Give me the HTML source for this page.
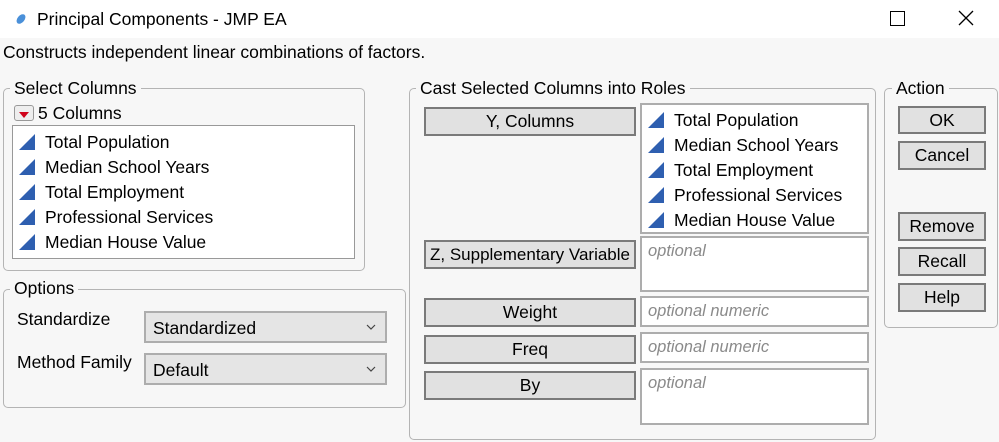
<!DOCTYPE html>
<html><head><style>
*{box-sizing:border-box;margin:0;padding:0}
body{width:999px;height:442px;background:#f7f7f7;font-family:"Liberation Sans",sans-serif;font-size:17.5px;color:#000;position:relative;overflow:hidden}
.a{position:absolute;white-space:nowrap}
.tb{position:absolute;left:0;top:0;width:999px;height:38px;background:#fff}
.grp{position:absolute;border:1px solid #b4b4b4;border-radius:5px}
.lg{position:absolute;background:#f7f7f7;padding:0 4px;font-size:17.5px;line-height:20px}
.btn{position:absolute;background:#e1e1e1;border:2px solid #7a7a7a;font-size:17.5px;display:flex;align-items:center;justify-content:center;white-space:nowrap}
.box{position:absolute;background:#fff;border:2px solid #adadad}
.it{position:absolute;height:25px;line-height:25px;font-size:17.5px;white-space:nowrap}
.tri{display:inline-block;width:18px;height:17px;vertical-align:-2px;margin-right:9px}
.opt{position:absolute;left:6px;top:4px;color:#8a8a8a;font-style:italic;font-size:16.5px;white-space:nowrap}
.dd{position:absolute;background:#e5e5e5;border:2px solid #adadad;font-size:17.5px;padding-left:7px;display:flex;align-items:center}
.dd svg{position:absolute;right:9px;top:11px}
</style></head><body>
<div class="tb"></div>
<svg class="a" style="left:14px;top:12px" width="14" height="14"><ellipse cx="7" cy="7" rx="3.5" ry="5.5" transform="rotate(40 7 7)" fill="#4a90d9"/></svg>
<div class="a" style="left:37px;top:9px;font-size:17.5px">Principal Components - JMP EA</div>
<div class="a" style="left:890px;top:11px;width:15px;height:15px;border:1.5px solid #000"></div>
<svg class="a" style="left:958px;top:10px" width="16" height="16"><path d="M1 1L15 15M15 1L1 15" stroke="#000" stroke-width="1.3"/></svg>
<div class="a" style="left:3px;top:42px">Constructs independent linear combinations of factors.</div>

<div class="grp" style="left:3px;top:88px;width:362px;height:183px"></div>
<div class="lg" style="left:10px;top:78px">Select Columns</div>
<div class="a" style="left:14px;top:105px;width:20px;height:16px;border:1px solid #999;border-radius:3px;background:#eee"><svg width="18" height="14"><path d="M4 4L14 4L9 10Z" fill="#d0021b"/></svg></div>
<div class="a" style="left:38px;top:103px">5 Columns</div>
<div class="box" style="left:12px;top:125px;width:343px;height:134px;border-width:1px;border-color:#999"></div>
<div class="it" style="left:18px;top:130px"><svg class="tri"><path d="M1 17L17 1L17 17Z" fill="#2e5fb0"/></svg>Total Population</div>
<div class="it" style="left:18px;top:155px"><svg class="tri"><path d="M1 17L17 1L17 17Z" fill="#2e5fb0"/></svg>Median School Years</div>
<div class="it" style="left:18px;top:180px"><svg class="tri"><path d="M1 17L17 1L17 17Z" fill="#2e5fb0"/></svg>Total Employment</div>
<div class="it" style="left:18px;top:205px"><svg class="tri"><path d="M1 17L17 1L17 17Z" fill="#2e5fb0"/></svg>Professional Services</div>
<div class="it" style="left:18px;top:230px"><svg class="tri"><path d="M1 17L17 1L17 17Z" fill="#2e5fb0"/></svg>Median House Value</div>

<div class="grp" style="left:3px;top:289px;width:403px;height:119px"></div>
<div class="lg" style="left:10px;top:278px">Options</div>
<div class="a" style="left:17px;top:309px">Standardize</div>
<div class="dd" style="left:144px;top:311px;width:243px;height:32px;padding-top:3px">Standardized<svg width="10" height="7"><path d="M1 1L5 5L9 1" stroke="#444" fill="none" stroke-width="1.2"/></svg></div>
<div class="a" style="left:17px;top:352px">Method Family</div>
<div class="dd" style="left:144px;top:353px;width:243px;height:32px;padding-top:3px">Default<svg width="10" height="7"><path d="M1 1L5 5L9 1" stroke="#444" fill="none" stroke-width="1.2"/></svg></div>

<div class="grp" style="left:409px;top:88px;width:467px;height:352px"></div>
<div class="lg" style="left:416px;top:78px">Cast Selected Columns into Roles</div>
<div class="btn" style="left:424px;top:107px;width:212px;height:29px">Y, Columns</div>
<div class="box" style="left:640px;top:103px;width:229px;height:131px"></div>
<div class="it" style="left:647px;top:108px"><svg class="tri"><path d="M1 17L17 1L17 17Z" fill="#2e5fb0"/></svg>Total Population</div>
<div class="it" style="left:647px;top:133px"><svg class="tri"><path d="M1 17L17 1L17 17Z" fill="#2e5fb0"/></svg>Median School Years</div>
<div class="it" style="left:647px;top:158px"><svg class="tri"><path d="M1 17L17 1L17 17Z" fill="#2e5fb0"/></svg>Total Employment</div>
<div class="it" style="left:647px;top:183px"><svg class="tri"><path d="M1 17L17 1L17 17Z" fill="#2e5fb0"/></svg>Professional Services</div>
<div class="it" style="left:647px;top:208px"><svg class="tri"><path d="M1 17L17 1L17 17Z" fill="#2e5fb0"/></svg>Median House Value</div>
<div class="btn" style="left:424px;top:240px;width:212px;height:29px;font-size:17px">Z, Supplementary Variable</div>
<div class="box" style="left:640px;top:236px;width:229px;height:56px"><div class="opt">optional</div></div>
<div class="btn" style="left:424px;top:298px;width:212px;height:29px">Weight</div>
<div class="box" style="left:640px;top:296px;width:229px;height:31px"><div class="opt">optional numeric</div></div>
<div class="btn" style="left:424px;top:335px;width:212px;height:29px">Freq</div>
<div class="box" style="left:640px;top:332px;width:229px;height:31px"><div class="opt">optional numeric</div></div>
<div class="btn" style="left:424px;top:371px;width:212px;height:29px">By</div>
<div class="box" style="left:640px;top:368px;width:229px;height:57px"><div class="opt">optional</div></div>

<div class="grp" style="left:884px;top:88px;width:114px;height:240px"></div>
<div class="lg" style="left:892px;top:78px">Action</div>
<div class="btn" style="left:898px;top:106px;width:88px;height:28px">OK</div>
<div class="btn" style="left:898px;top:141px;width:88px;height:29px">Cancel</div>
<div class="btn" style="left:898px;top:212px;width:88px;height:29px">Remove</div>
<div class="btn" style="left:898px;top:247px;width:88px;height:29px">Recall</div>
<div class="btn" style="left:898px;top:283px;width:88px;height:29px">Help</div>
</body></html>
